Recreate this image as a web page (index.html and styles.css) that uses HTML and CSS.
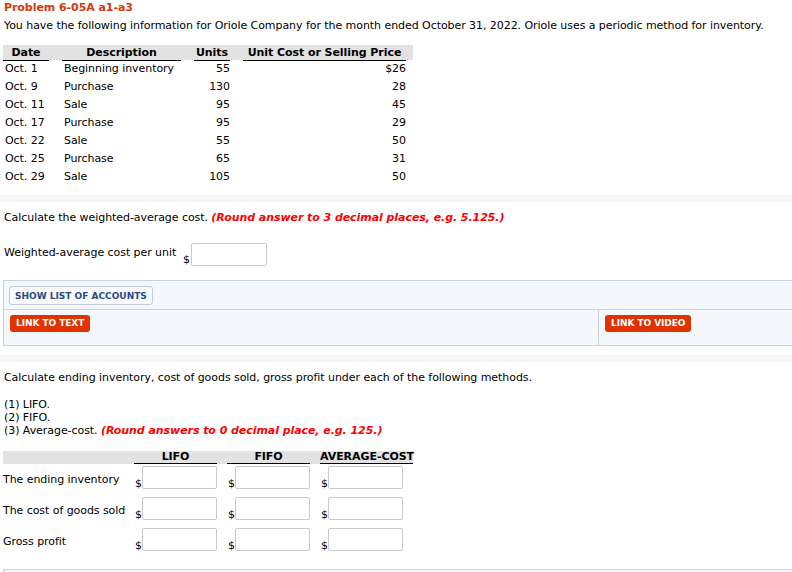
FILE: index.html
```html
<!DOCTYPE html>
<html lang="en">
<head>
    <meta charset="UTF-8">
    <title>Problem 6-05A a1-a3</title>
    <link rel="stylesheet" href="styles.css">
</head>
<body>

    <h1 class="title">Problem 6-05A a1-a3</h1>
    <p class="intro">You have the following information for Oriole Company for the month ended October 31, 2022. Oriole uses a periodic method for inventory.</p>

    <div class="inv">
        <div class="inv-row inv-head">
            <div>Date</div>
            <div>Description</div>
            <div>Units</div>
            <div>Unit Cost or Selling Price</div>
        </div>
        <div class="inv-row"><div>Oct. 1</div><div>Beginning inventory</div><div class="num">55</div><div class="num">$26</div></div>
        <div class="inv-row"><div>Oct. 9</div><div>Purchase</div><div class="num">130</div><div class="num">28</div></div>
        <div class="inv-row"><div>Oct. 11</div><div>Sale</div><div class="num">95</div><div class="num">45</div></div>
        <div class="inv-row"><div>Oct. 17</div><div>Purchase</div><div class="num">95</div><div class="num">29</div></div>
        <div class="inv-row"><div>Oct. 22</div><div>Sale</div><div class="num">55</div><div class="num">50</div></div>
        <div class="inv-row"><div>Oct. 25</div><div>Purchase</div><div class="num">65</div><div class="num">31</div></div>
        <div class="inv-row"><div>Oct. 29</div><div>Sale</div><div class="num">105</div><div class="num">50</div></div>
    </div>

    <div class="band"></div>

    <div class="part">
        <p class="question">Calculate the weighted-average cost. <em class="note">(Round answer to 3 decimal places, e.g. 5.125.)</em></p>
        <div class="wac-row">
            <label class="wac-label" for="wac">Weighted-average cost per unit</label>
            <div class="money"><span class="dollar">$</span><input type="text" id="wac"></div>
        </div>
    </div>

    <div class="tools">
        <div class="tools-top">
            <button class="accounts-btn">SHOW LIST OF ACCOUNTS</button>
        </div>
        <div class="tools-bottom">
            <div class="tools-cell left"><a class="red-btn" href="#">LINK TO TEXT</a></div>
            <div class="tools-cell right"><a class="red-btn" href="#">LINK TO VIDEO</a></div>
        </div>
    </div>

    <div class="band"></div>

    <div class="part">
        <p class="question">Calculate ending inventory, cost of goods sold, gross profit under each of the following methods.</p>
        <p class="methods">(1) LIFO.<br>(2) FIFO.<br>(3) Average-cost. <em class="note">(Round answers to 0 decimal place, e.g. 125.)</em></p>

        <div class="ans">
            <div class="ans-row ans-head">
                <div></div>
                <div>LIFO</div>
                <div>FIFO</div>
                <div>AVERAGE-COST</div>
            </div>
            <div class="ans-row">
                <div class="ans-label">The ending inventory</div>
                <div class="money"><span class="dollar">$</span><input type="text"></div>
                <div class="money"><span class="dollar">$</span><input type="text"></div>
                <div class="money"><span class="dollar">$</span><input type="text"></div>
            </div>
            <div class="ans-row">
                <div class="ans-label">The cost of goods sold</div>
                <div class="money"><span class="dollar">$</span><input type="text"></div>
                <div class="money"><span class="dollar">$</span><input type="text"></div>
                <div class="money"><span class="dollar">$</span><input type="text"></div>
            </div>
            <div class="ans-row">
                <div class="ans-label">Gross profit</div>
                <div class="money"><span class="dollar">$</span><input type="text"></div>
                <div class="money"><span class="dollar">$</span><input type="text"></div>
                <div class="money"><span class="dollar">$</span><input type="text"></div>
            </div>
        </div>
    </div>

    <div class="tools tools-end"></div>

</body>
</html>
```

FILE: styles.css
```css
html {
    overflow: hidden;
}
body {
    margin: 0;
    font-family: "DejaVu Sans", Verdana, sans-serif;
    font-size: 11px;
    line-height: 13px;
    letter-spacing: -0.06px;
    color: #000;
    background-color: #fff;
}
.title {
    margin: 1px 0 0 4px;
    font-size: 11px;
    line-height: 13px;
    font-weight: bold;
    color: #d4380d;
}
.intro {
    margin: 5px 0 0 4px;
}
.inv {
    margin: 13px 0 0 3px;
    width: 410px;
}
.inv-row {
    display: grid;
    grid-template-columns: 46px 119px 36px 163px;
    column-gap: 13px;
    height: 18px;
    line-height: 18px;
    white-space: nowrap;
}
.inv-row > div:first-child {
    padding-left: 2px;
}
.inv-row > div:nth-child(2) {
    padding-left: 2px;
}
.inv-head {
    background-color: #e2e2e2;
    height: 15px;
    line-height: 15px;
    font-weight: bold;
}
.inv-head > div {
    text-align: center;
    border-bottom: 1px solid #000;
}
.inv-head > div:first-child,
.inv-head > div:nth-child(2) {
    padding-left: 0;
}
.num {
    text-align: right;
}
.band {
    height: 7px;
    margin-top: 9px;
    background-color: #f4f7fa;
}
.part {
    padding-left: 4px;
}
.question {
    margin: 9px 0 0 0;
}
.note {
    color: #f00;
    font-weight: bold;
}
.wac-row {
    display: flex;
    margin-top: 19px;
}
.wac-label {
    width: 179px;
    padding-top: 3px;
    white-space: nowrap;
}
.money {
    display: flex;
    align-items: flex-end;
}
.dollar {
    width: 8px;
    line-height: 13px;
}
.money input {
    width: 73px;
    height: 21px;
    margin: 0;
    padding: 0 3px;
    border: 1px solid #c9c9c9;
    border-radius: 2px;
    box-sizing: content-box;
    font-family: inherit;
    font-size: 11px;
}
.wac-row .money input {
    width: 68px;
}
.ans-row .money input {
    width: 67px;
    padding: 0 3px;
}
.tools {
    margin: 14px -20px 0 3px;
    border: 1px solid #c8d3e0;
    background-color: #f4f7fb;
}
.tools-top {
    padding: 5px 6px 4px 5px;
    border-bottom: 1px solid #c8d3e0;
}
.accounts-btn {
    height: 19px;
    padding: 0 5px;
    border: 1px solid #c3cbd6;
    border-radius: 3px;
    background-color: #f7f9fc;
    color: #2d4a80;
    font-family: "DejaVu Sans", Verdana, sans-serif;
    font-size: 9px;
    font-weight: bold;
}
.tools-bottom {
    display: flex;
    height: 35px;
}
.tools-cell {
    padding: 5px 6px 0 6px;
}
.tools-cell.left {
    width: 582px;
    border-right: 1px solid #c8d3e0;
}
.red-btn {
    display: inline-block;
    height: 17px;
    line-height: 17px;
    padding: 0 6px;
    border-radius: 3px;
    background-color: #e03300;
    color: #fff;
    font-size: 9px;
    font-weight: bold;
    text-decoration: none;
}
.methods {
    margin: 14px 0 0 0;
}
.ans {
    margin: 14px 0 0 -1px;
    width: 410px;
}
.ans-row {
    display: grid;
    grid-template-columns: 121px 83px 83px 93px;
    column-gap: 10px;
    height: 31px;
    white-space: nowrap;
}
.ans-head {
    height: 13px;
    line-height: 12px;
    background-color: #e2e2e2;
    font-weight: bold;
    margin-bottom: 2px;
}
.ans-head > div {
    text-align: center;
}
.ans-head > div + div {
    border-bottom: 1px solid #000;
}
.ans-label {
    padding-top: 7px;
}
.ans-row .money {
    align-items: flex-start;
    padding-left: 1px;
}
.ans-row .money .dollar {
    padding-top: 11px;
    width: 7px;
}
.ans-row .money input {
    height: 21px;
}
.tools-end {
    margin-top: 10px;
    height: 20px;
}
```
